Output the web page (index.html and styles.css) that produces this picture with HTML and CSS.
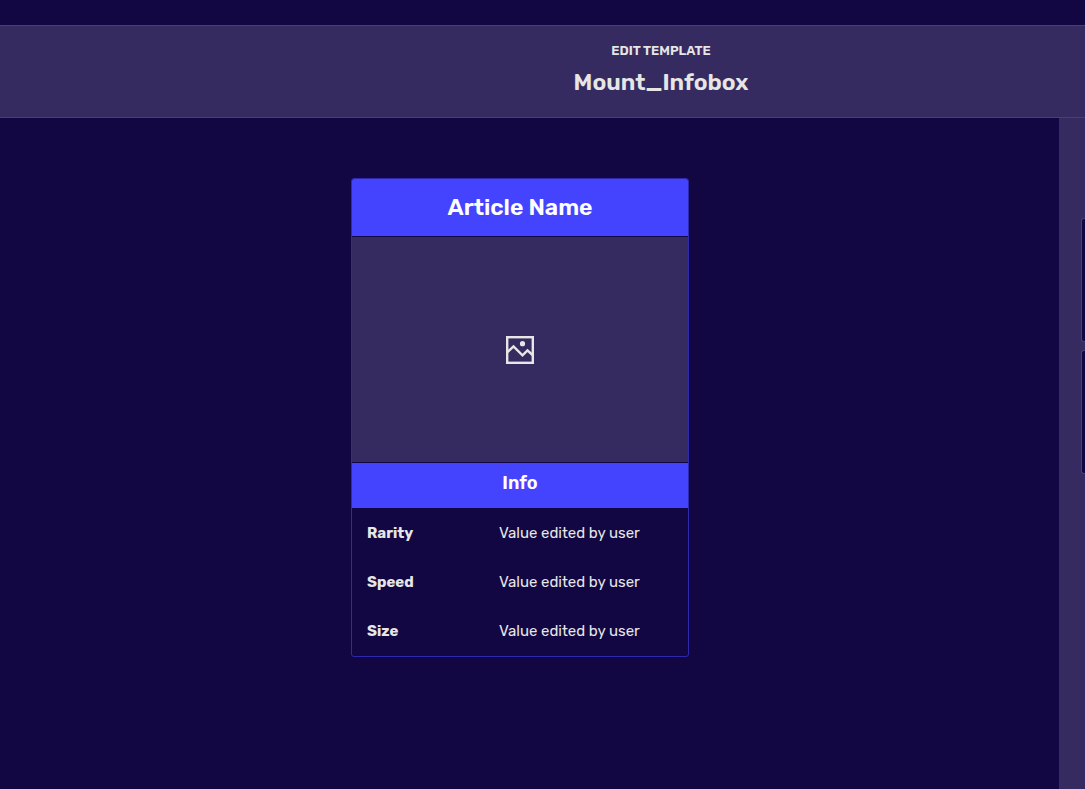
FILE: index.html
```
<!DOCTYPE html>
<html lang="en">
<head>
  <meta charset="UTF-8">
  <meta name="viewport" content="width=device-width, initial-scale=1.0">
  <title>Edit template - Mount_Infobox</title>
  <link rel="stylesheet" href="styles.css">
</head>
<body>
  <header class="header">
    <p class="header-label">Edit template</p>
    <h1 class="header-title">Mount_Infobox</h1>
  </header>

  <div class="builder">
    <main class="workspace">
      <section class="infobox">
        <h2 class="infobox-title">Article Name</h2>
        <div class="infobox-image">
          <svg width="28" height="28" viewBox="0 0 28 28" fill="none" stroke="currentColor" stroke-width="2.4" aria-hidden="true">
            <rect x="1.2" y="1.2" width="25.6" height="25.6"/>
            <path d="M1.5 16.2L7.5 10.4L16.5 19.4L21.5 14.4L26.5 19"/>
            <circle cx="16.5" cy="7.7" r="2.6" fill="currentColor" stroke="none"/>
          </svg>
        </div>
        <h3 class="infobox-section">Info</h3>
        <dl class="infobox-data">
          <div class="infobox-row">
            <dt>Rarity</dt>
            <dd>Value edited by user</dd>
          </div>
          <div class="infobox-row">
            <dt>Speed</dt>
            <dd>Value edited by user</dd>
          </div>
          <div class="infobox-row">
            <dt>Size</dt>
            <dd>Value edited by user</dd>
          </div>
        </dl>
      </section>
    </main>

    <aside class="sidebar">
      <div class="sidebar-card"></div>
      <div class="sidebar-card"></div>
    </aside>
  </div>
</body>
</html>
```

FILE: styles.css
```
* {
  box-sizing: border-box;
  margin: 0;
}
body {
  display: flex;
  flex-direction: column;
  min-height: 100vh;
  padding-top: 25px;
  font-family: Rubik, Inter, sans-serif;
  background: #120643;
  color: #e6e6e6;
}
.header {
  padding: 16px 0 19px 237px;
  text-align: center;
  background: #362b60;
  border-top: 1px solid #4a3f70;
  border-bottom: 1px solid #4a3f70;
}
.header-label {
  font-size: 13px;
  line-height: 18px;
  font-weight: 600;
  text-transform: uppercase;
}
.header-title {
  margin-top: 6px;
  font-size: 23px;
  line-height: 32px;
  font-weight: 600;
}
.builder {
  flex: 1;
  display: flex;
}
.workspace {
  flex: 1;
  padding: 60px 19px 60px 0;
}
.infobox {
  width: 338px;
  margin: 0 auto;
  border: 1px solid #2f29b0;
  border-radius: 3px;
  overflow: hidden;
}
.infobox-title {
  font-size: 23px;
  line-height: 57px;
  font-weight: 600;
  text-align: center;
  color: #fff;
  background: #4444ff;
}
.infobox-image {
  display: flex;
  align-items: center;
  justify-content: center;
  height: 227px;
  background: #362b60;
  border-top: 1px solid #120643;
  border-bottom: 1px solid #120643;
}
.infobox-section {
  padding: 8px 0 13px;
  font-size: 18px;
  line-height: 24px;
  font-weight: 600;
  text-align: center;
  color: #fff;
  background: #4444ff;
}
.infobox-data {
  padding-bottom: 1px;
}
.infobox-row {
  display: flex;
  padding: 15px 15px 14px;
  font-size: 15px;
  line-height: 20px;
}
.infobox-row dt {
  flex: 0 0 132px;
  font-weight: 700;
}
.infobox-row dd {
  flex: 1;
}
.sidebar {
  flex: 0 0 26px;
  padding: 100px 0 0 22px;
  background: #362b60;
}
.sidebar-card {
  height: 124px;
  margin-bottom: 8px;
  border: 1px solid #4a3f70;
  border-right: 0;
  border-radius: 3px 0 0 3px;
  background: #120643;
}
```
